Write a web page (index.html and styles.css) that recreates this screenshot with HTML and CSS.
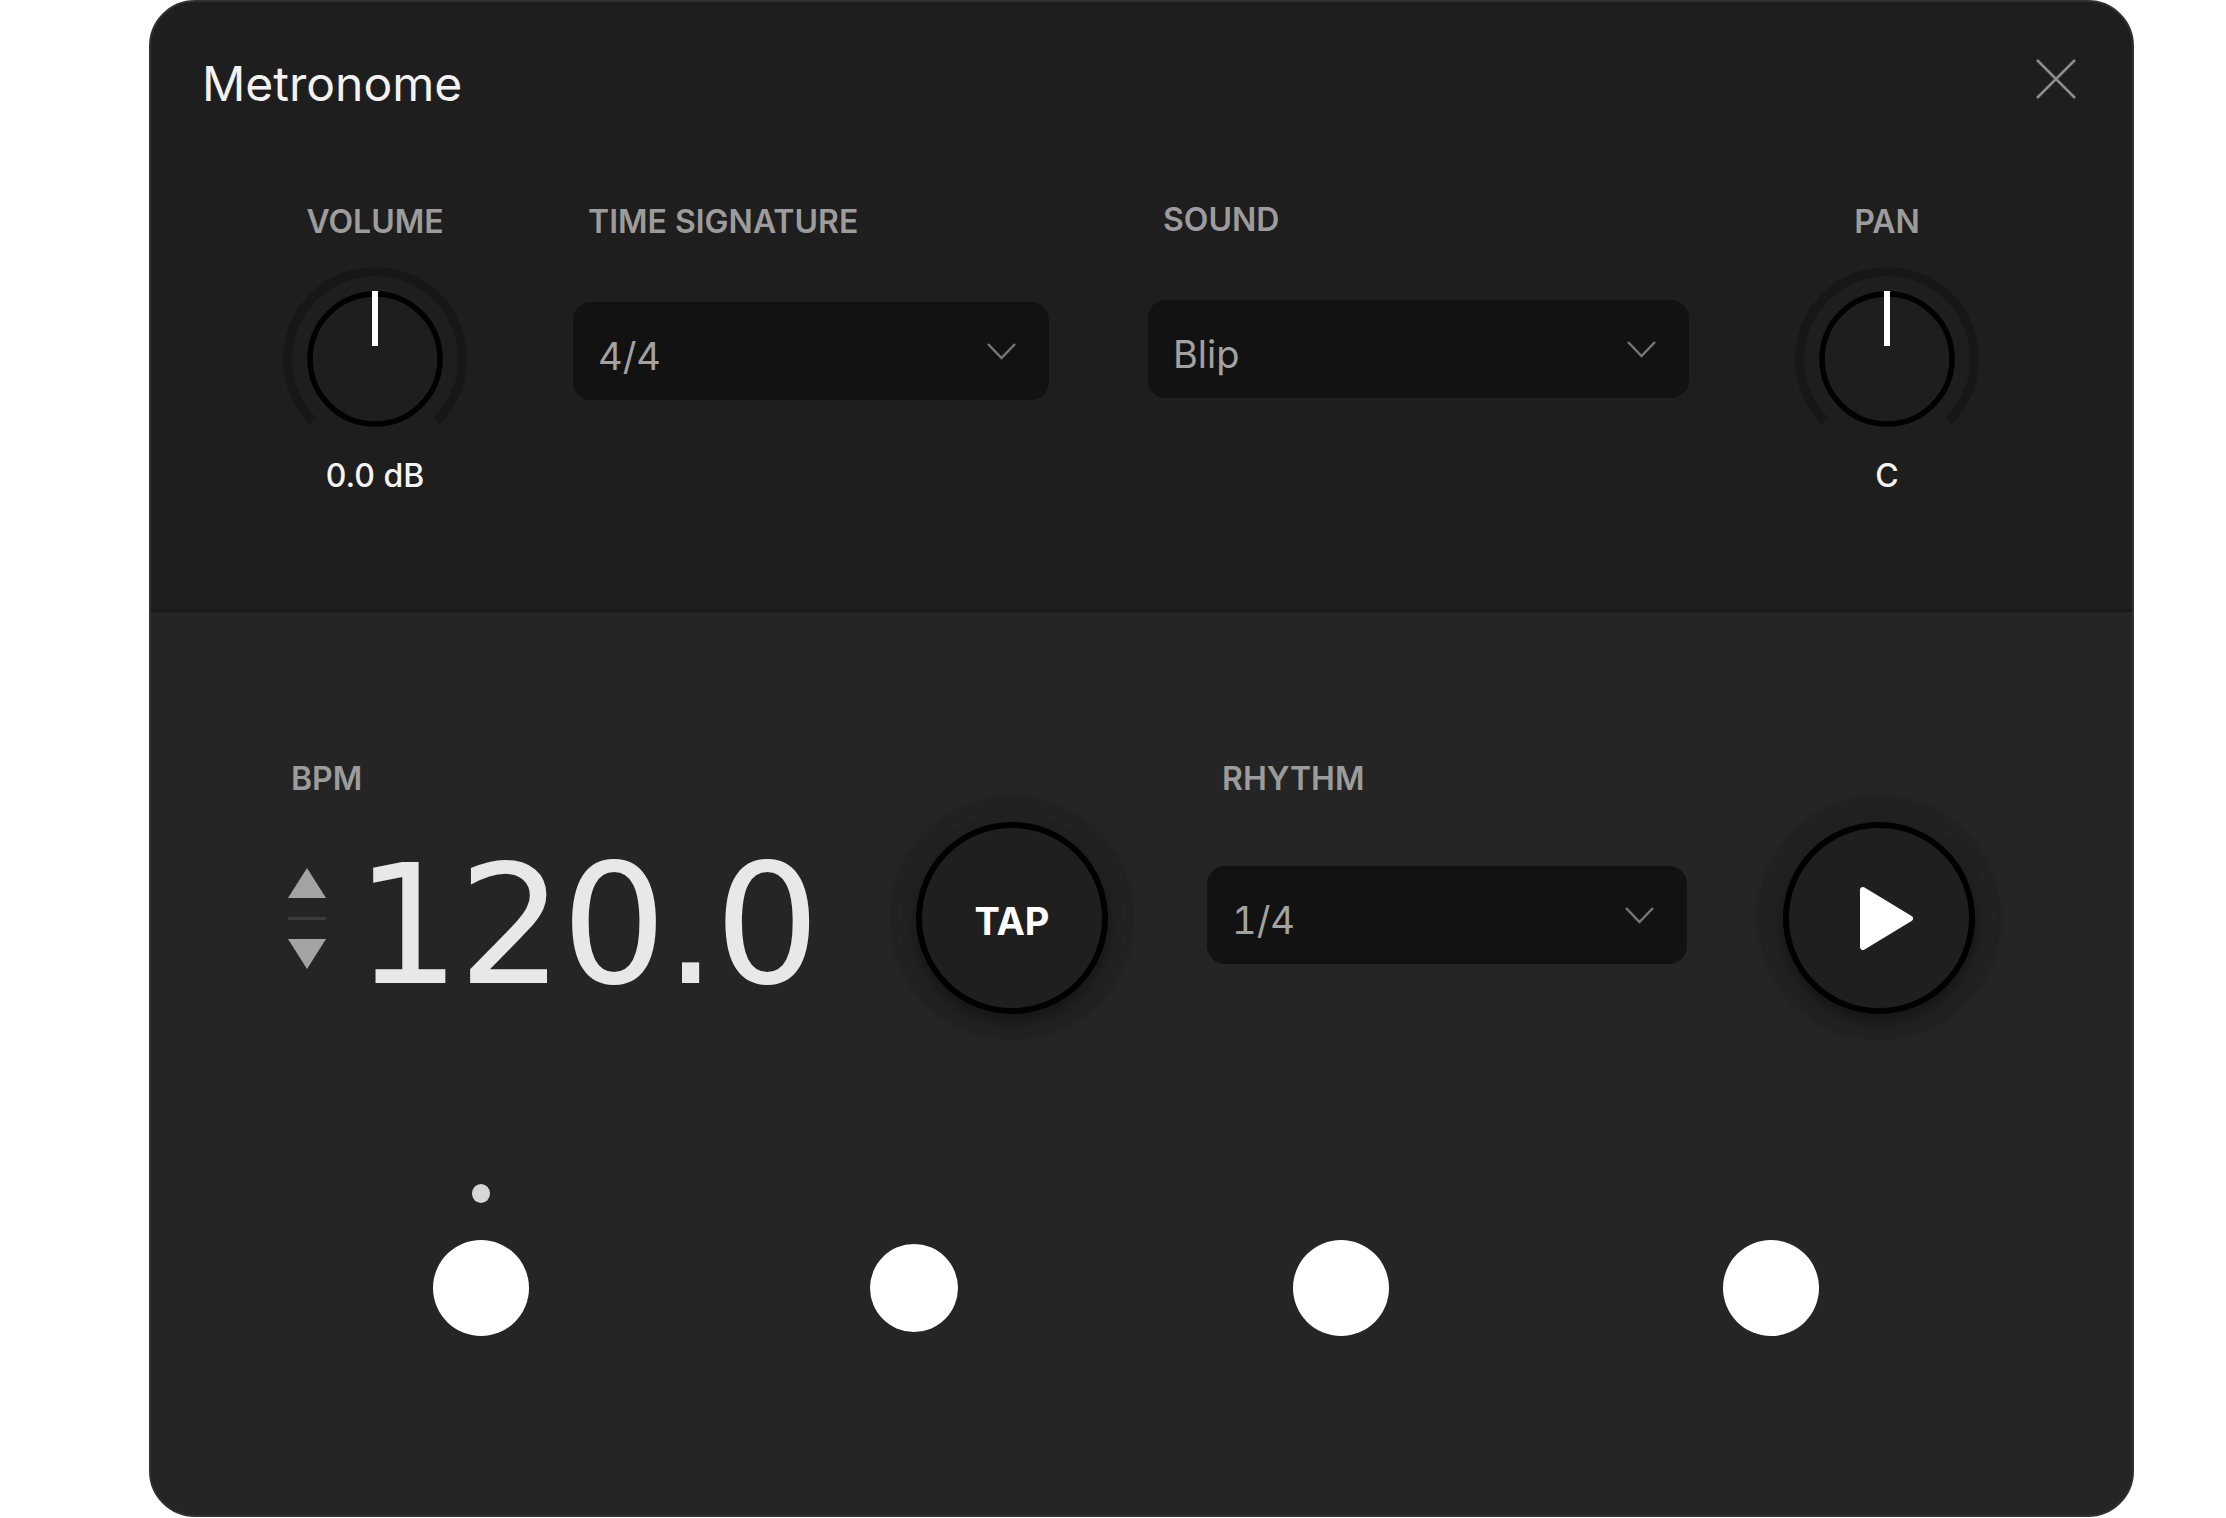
FILE: index.html
```html
<!DOCTYPE html>
<html lang="en">
<head>
<meta charset="utf-8">
<title>Metronome</title>
<link rel="stylesheet" href="styles.css">
</head>
<body>
<div class="panel">
  <section class="top">
    <header class="header">
      <h1 class="title">Metronome</h1>
      <button class="close" aria-label="Close">
        <svg width="40" height="40" viewBox="0 0 40 40"><path d="M1 1 L39 39 M39 1 L1 39" stroke="#8c8c8c" stroke-width="2.5" fill="none"/></svg>
      </button>
    </header>
    <div class="controls">
      <div class="knob-col">
        <div class="label">VOLUME</div>
        <svg class="knob" width="184" height="184" viewBox="0 0 184 184">
          <path d="M30.1 153.9 A87.5 87.5 0 1 1 153.9 153.9" stroke="#171717" stroke-width="9" fill="none"/>
          <circle cx="92" cy="92" r="65" stroke="#000" stroke-width="5.5" fill="none"/>
          <line x1="92" y1="24" x2="92" y2="79" stroke="#fff" stroke-width="6"/>
        </svg>
        <div class="value">0.0 dB</div>
      </div>
      <div class="select-col time">
        <div class="label indent">TIME SIGNATURE</div>
        <div class="select"><span class="select-text">4/4</span>
          <svg width="29" height="17" viewBox="0 0 29 17"><path d="M1 1 L14.5 15 L28 1" stroke="#757575" stroke-width="2.5" fill="none"/></svg>
        </div>
      </div>
      <div class="select-col sound">
        <div class="label indent">SOUND</div>
        <div class="select"><span class="select-text">Blip</span>
          <svg width="29" height="17" viewBox="0 0 29 17"><path d="M1 1 L14.5 15 L28 1" stroke="#757575" stroke-width="2.5" fill="none"/></svg>
        </div>
      </div>
      <div class="knob-col pan">
        <div class="label">PAN</div>
        <svg class="knob" width="184" height="184" viewBox="0 0 184 184">
          <path d="M30.1 153.9 A87.5 87.5 0 1 1 153.9 153.9" stroke="#171717" stroke-width="9" fill="none"/>
          <circle cx="92" cy="92" r="65" stroke="#000" stroke-width="5.5" fill="none"/>
          <line x1="92" y1="24" x2="92" y2="79" stroke="#fff" stroke-width="6"/>
        </svg>
        <div class="value">C</div>
      </div>
    </div>
  </section>
  <section class="bottom">
    <div class="transport">
      <div class="bpm-block">
        <div class="label bpm-label">BPM</div>
        <div class="bpm-row">
          <div class="stepper">
            <svg width="38" height="30" viewBox="0 0 38 30"><path d="M19 0 L38 30 L0 30 Z" fill="#a3a3a3"/></svg>
            <div class="step-sep"></div>
            <svg width="38" height="30" viewBox="0 0 38 30"><path d="M0 0 L38 0 L19 30 Z" fill="#a3a3a3"/></svg>
          </div>
          <div class="bpm-value">120.0</div>
        </div>
      </div>
      <div class="round-wrap">
        <button class="round-btn tap">TAP</button>
      </div>
      <div class="rhythm-block">
        <div class="label indent">RHYTHM</div>
        <div class="rhythm-row">
          <div class="select rhythm"><span class="select-text">1/4</span>
            <svg width="29" height="17" viewBox="0 0 29 17"><path d="M1 1 L14.5 15 L28 1" stroke="#757575" stroke-width="2.5" fill="none"/></svg>
          </div>
        </div>
      </div>
      <div class="round-wrap play-wrap">
        <button class="round-btn play" aria-label="Play">
          <svg width="53" height="63" viewBox="0 0 53 63"><path d="M3 3 L50 31.5 L3 60 Z" fill="#fff" stroke="#fff" stroke-width="6" stroke-linejoin="round"/></svg>
        </button>
      </div>
    </div>
    <div class="beats">
      <div class="beat-cell"><div class="dot"></div><div class="beat-slot"><div class="beat"></div></div></div>
      <div class="beat-cell"><div class="dot hidden"></div><div class="beat-slot"><div class="beat small"></div></div></div>
      <div class="beat-cell"><div class="dot hidden"></div><div class="beat-slot"><div class="beat"></div></div></div>
      <div class="beat-cell"><div class="dot hidden"></div><div class="beat-slot"><div class="beat"></div></div></div>
    </div>
  </section>
</div>
</body>
</html>
```

FILE: styles.css
```css
html, body {
  margin: 0;
  padding: 0;
  background: #ffffff;
}

body {
  font-family: "Inter", "Noto Sans", sans-serif;
}

.panel {
  margin-left: 149px;
  width: 1985px;
  height: 1517px;
  box-sizing: border-box;
  border: 2px solid #313131;
  border-radius: 46px;
  overflow: hidden;
  display: flex;
  flex-direction: column;
  background: #252525;
}

.top {
  height: 610px;
  box-sizing: border-box;
  background: #1e1e1e;
  border-bottom: 3px solid #191919;
  padding: 58px 56px 0 51px;
}

.header {
  display: flex;
  justify-content: space-between;
  align-items: flex-start;
  height: 48px;
}

.title {
  margin: 0;
  font-size: 48px;
  line-height: 48px;
  font-weight: 400;
  color: #f2f2f2;
}

.close {
  margin: 0;
  padding: 0;
  border: none;
  background: none;
  width: 40px;
  height: 40px;
  display: block;
  margin-top: -1px;
}

.close svg {
  display: block;
}

.controls {
  display: flex;
  align-items: flex-start;
  margin-top: 98px;
  padding-left: 81px;
}

.label {
  font-size: 32px;
  line-height: 32px;
  font-weight: 600;
  color: #9c9c9c;
  white-space: nowrap;
}

.label.indent {
  padding-left: 15px;
}

.knob-col {
  width: 184px;
  display: flex;
  flex-direction: column;
  align-items: center;
}

.knob {
  display: block;
  margin-top: 29px;
}

.value {
  margin-top: 9px;
  font-size: 32px;
  line-height: 32px;
  font-weight: 500;
  color: #f4f4f4;
}

.select-col.time {
  width: 476px;
  margin-left: 106px;
}

.select-col.sound {
  width: 541px;
  margin-left: 99px;
  margin-top: -2px;
}

.knob-col.pan {
  margin-left: 106px;
}

.select {
  margin-top: 64px;
  height: 98px;
  box-sizing: border-box;
  background: #121212;
  border-radius: 18px;
  display: flex;
  align-items: center;
  justify-content: space-between;
  padding: 0 33px 0 25px;
}

.select svg {
  display: block;
}

.select-text {
  font-size: 38px;
  line-height: 38px;
  font-weight: 400;
  color: #a2a2a2;
  padding-top: 9px;
  font-variant-numeric: tabular-nums;
}

.bottom {
  flex: 1;
  background: #252525;
  padding-top: 151px;
}

.transport {
  display: flex;
  align-items: flex-end;
  padding-left: 137px;
}

.bpm-block {
  width: 601px;
}

.bpm-label {
  padding-left: 3px;
}

.bpm-row {
  height: 246px;
  display: flex;
  align-items: center;
}

.stepper {
  width: 38px;
  display: flex;
  flex-direction: column;
  align-items: center;
}

.stepper svg {
  display: block;
}

.step-sep {
  width: 38px;
  height: 3px;
  margin: 19px 0;
  background: #3b3b3b;
}

.bpm-value {
  margin-left: 29px;
  padding-top: 15px;
  font-family: "DejaVu Sans", sans-serif;
  font-size: 166px;
  line-height: 166px;
  letter-spacing: -2.5px;
  color: #e8e8e8;
}

.round-wrap {
  width: 246px;
  height: 246px;
  display: flex;
  align-items: center;
  justify-content: center;
}

.round-btn {
  width: 192px;
  height: 192px;
  box-sizing: border-box;
  border-radius: 50%;
  border: 6px solid #000;
  background: #1f1f1f;
  box-shadow: 0 8px 14px rgba(0, 0, 0, 0.35), 0 0 3px 26px #212121;
  display: flex;
  align-items: center;
  justify-content: center;
  padding: 0;
  margin: 0;
}

.tap {
  font-family: "Inter", "Noto Sans", sans-serif;
  font-size: 38px;
  font-weight: 700;
  color: #ffffff;
  padding-top: 5px;
}

.play svg {
  display: block;
  margin-left: 15px;
}

.rhythm-block {
  width: 480px;
  margin-left: 72px;
}

.rhythm-row {
  height: 246px;
  display: flex;
  flex-direction: column;
  justify-content: center;
}

.select.rhythm {
  margin-top: 0;
  margin-bottom: 6px;
}

.play-wrap {
  margin-left: 69px;
}

.beats {
  margin-top: 143px;
  margin-left: 115px;
  display: grid;
  grid-template-columns: repeat(4, 430px);
}

.beat-cell {
  display: flex;
  flex-direction: column;
  align-items: center;
}

.dot {
  width: 18px;
  height: 19px;
  border-radius: 50%;
  background: #d6d6d6;
  margin-bottom: 37px;
}

.dot.hidden {
  visibility: hidden;
}

.beat-slot {
  height: 96px;
  display: flex;
  align-items: center;
  justify-content: center;
}

.beat {
  width: 96px;
  height: 96px;
  border-radius: 50%;
  background: #ffffff;
}

.beat.small {
  width: 88px;
  height: 88px;
  margin-left: 6px;
}
```
